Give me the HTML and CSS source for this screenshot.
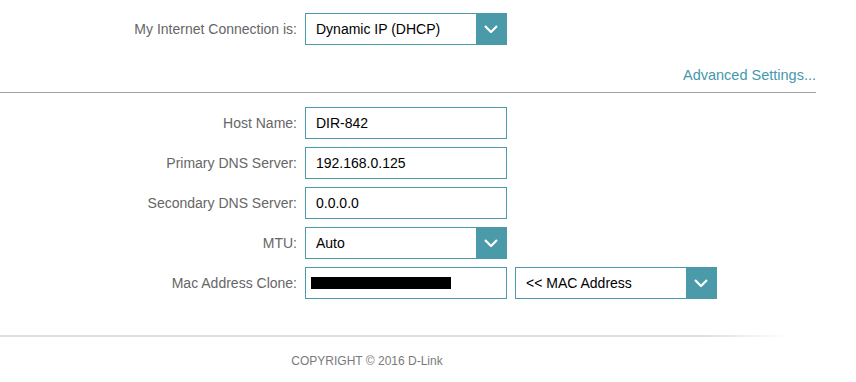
FILE: index.html
```html
<!DOCTYPE html>
<html>
<head>
<meta charset="utf-8">
<link rel="stylesheet" href="styles.css">
</head>
<body>
<div class="page">
  <div class="row top-row">
    <div class="lbl">My Internet Connection is:</div>
    <div class="select">
      <span class="val">Dynamic IP (DHCP)</span>
      <span class="arrow"><svg width="14" height="8" viewBox="0 0 14 8"><polyline points="1,1 7,7 13,1" fill="none" stroke="#fff" stroke-width="2.2"/></svg></span>
    </div>
  </div>
  <div class="adv"><span class="adv-link">Advanced Settings...</span></div>
  <div class="divider"></div>
  <div class="form">
    <div class="row">
      <div class="lbl">Host Name:</div>
      <div class="input">DIR-842</div>
    </div>
    <div class="row">
      <div class="lbl">Primary DNS Server:</div>
      <div class="input">192.168.0.125</div>
    </div>
    <div class="row">
      <div class="lbl">Secondary DNS Server:</div>
      <div class="input">0.0.0.0</div>
    </div>
    <div class="row">
      <div class="lbl">MTU:</div>
      <div class="select">
        <span class="val">Auto</span>
        <span class="arrow"><svg width="14" height="8" viewBox="0 0 14 8"><polyline points="1,1 7,7 13,1" fill="none" stroke="#fff" stroke-width="2.2"/></svg></span>
      </div>
    </div>
    <div class="row">
      <div class="lbl">Mac Address Clone:</div>
      <div class="input"><span class="redact"></span></div>
      <div class="select">
        <span class="val">&lt;&lt; MAC Address</span>
        <span class="arrow"><svg width="14" height="8" viewBox="0 0 14 8"><polyline points="1,1 7,7 13,1" fill="none" stroke="#fff" stroke-width="2.2"/></svg></span>
      </div>
    </div>
  </div>
  <div class="footer-line"></div>
  <div class="copyright">COPYRIGHT © 2016 D-Link</div>
</div>
</body>
</html>
```
FILE: styles.css
```css
html, body {
  margin: 0;
  padding: 0;
  background: #fff;
}
body {
  font-family: "Liberation Sans", Arial, sans-serif;
  font-size: 14px;
  color: #000;
}
.page {
  width: 856px;
  padding-top: 13px;
}
.row {
  display: flex;
  align-items: center;
  gap: 8px;
  height: 32px;
}
.lbl {
  width: 297px;
  text-align: right;
  color: #666;
  font-size: 14px;
}
.select, .input {
  width: 202px;
  height: 32px;
  box-sizing: border-box;
  border: 1px solid #4a9aa9;
  display: flex;
  align-items: center;
  background: #fff;
}
.val {
  flex: 1;
  padding-left: 10px;
}
.arrow {
  width: 30px;
  align-self: stretch;
  background: #4a9aa9;
  display: flex;
  align-items: center;
  justify-content: center;
}
.input {
  padding-left: 10px;
}
.redact {
  display: block;
  width: 140px;
  height: 12px;
  background: #000;
  margin-left: -5px;
}
.adv {
  width: 816px;
  margin-top: 21px;
  text-align: right;
  line-height: 18px;
}
.adv-link {
  color: #4598ad;
  font-size: 14.5px;
}
.divider {
  width: 816px;
  height: 1px;
  background: #a0a0a0;
  margin-top: 8px;
}
.form {
  margin-top: 14px;
  display: flex;
  flex-direction: column;
  gap: 8px;
}
.footer-line {
  margin-top: 36px;
  height: 2px;
  width: 856px;
  background: linear-gradient(to right, #dedede 0, #dedede 82%, rgba(222,222,222,0) 92%);
}
.copyright {
  width: 734px;
  text-align: center;
  margin-top: 16px;
  line-height: 16px;
  font-size: 12px;
  color: #7a7a7a;
}
```
